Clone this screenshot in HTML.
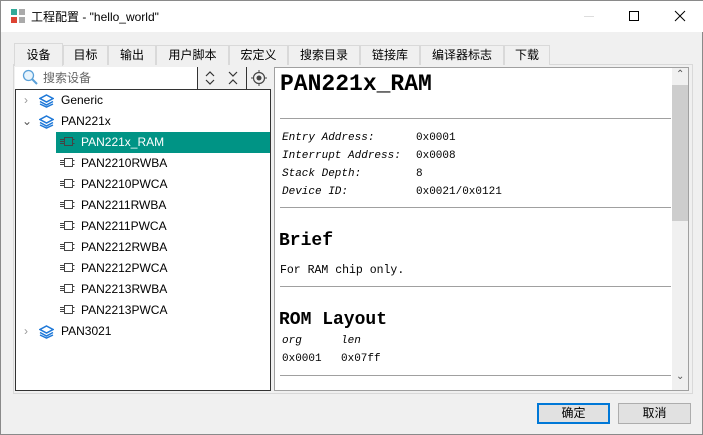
<!DOCTYPE html>
<html><head><style>
*{margin:0;padding:0;box-sizing:border-box}
body{width:703px;height:435px;background:#f0f0f0;font-family:"Liberation Sans","Noto Sans CJK SC",sans-serif;font-size:12px;color:#000;position:relative;overflow:hidden;border:1px solid #8a8a8a}
.a{position:absolute}
.title{left:0;top:0;width:703px;height:31px;background:#fff}
.tab{position:absolute;top:44px;height:20px;border:1px solid #d9d9d9;border-bottom:none;background:#f0f0f0;text-align:center;line-height:19px;font-size:12px}
.mono{font-family:"Liberation Mono","DejaVu Sans Mono",monospace}
.row{position:absolute;left:0;height:21px;line-height:21px;font-size:12px}
hr{position:absolute;left:5px;width:391px;border:none;border-top:1px solid #a0a0a0}
</style></head><body>
<div class="a title"></div>
<svg class="a" style="left:10px;top:8px" width="14" height="14"><rect x="0" y="0" width="6" height="6" fill="#3a9"/><rect x="8" y="0" width="6" height="6" fill="#aaa"/><rect x="0" y="8" width="6" height="6" fill="#d43"/><rect x="8" y="8" width="6" height="6" fill="#aaa"/></svg>
<div class="a" style="left:30px;top:7px;font-size:12px">工程配置 - "hello_world"</div>
<div class="a" style="left:583px;top:15px;width:10px;height:1px;background:#ddd"></div>
<div class="a" style="left:628px;top:10px;width:10px;height:10px;border:1px solid #000"></div>
<svg class="a" style="left:673px;top:9px" width="12" height="12"><path d="M1 1L11 11M11 1L1 11" stroke="#000" stroke-width="1"/></svg>

<div class="a" style="left:12px;top:63px;width:680px;height:330px;border:1px solid #d9d9d9;background:#f0f0f0"></div>
<div class="tab" style="left:62px;width:45px">目标</div>
<div class="tab" style="left:107px;width:48px">输出</div>
<div class="tab" style="left:155px;width:73px">用户脚本</div>
<div class="tab" style="left:228px;width:59px">宏定义</div>
<div class="tab" style="left:287px;width:72px">搜索目录</div>
<div class="tab" style="left:359px;width:60px">链接库</div>
<div class="tab" style="left:419px;width:84px">编译器标志</div>
<div class="tab" style="left:503px;width:46px">下载</div>
<div class="tab" style="left:13px;top:42px;width:49px;height:23px;background:#f0f0f0;border-color:#d9d9d9;line-height:22px">设备</div>

<div class="a" style="left:14px;top:66px;width:182px;height:22px;background:#fff"></div>
<svg class="a" style="left:21px;top:68px" width="16" height="16"><circle cx="6.5" cy="6.5" r="5" fill="#e8f4fc" stroke="#5aa0d8" stroke-width="1.3"/><path d="M10 10L15 15" stroke="#5aa0d8" stroke-width="2"/></svg>
<div class="a" style="left:42px;top:68px;color:#666">搜索设备</div>
<div class="a" style="left:196px;top:66px;width:1px;height:22px;background:#333"></div>
<div class="a" style="left:245px;top:66px;width:1px;height:22px;background:#333"></div>
<svg class="a" style="left:203px;top:70px" width="12" height="14"><path d="M2 5L6 1L10 5M2 9L6 13L10 9" stroke="#333" fill="none" stroke-width="1.2"/></svg>
<svg class="a" style="left:226px;top:70px" width="12" height="14"><path d="M2 1L6 5L10 1M2 13L6 9L10 13" stroke="#333" fill="none" stroke-width="1.2"/></svg>
<svg class="a" style="left:250px;top:69px" width="16" height="16"><circle cx="8" cy="8" r="5.5" fill="none" stroke="#444" stroke-width="1.2"/><circle cx="8" cy="8" r="2.5" fill="#444"/><path d="M8 0V3M8 13V16M0 8H3M13 8H16" stroke="#444"/></svg>

<div class="a" style="left:14px;top:88px;width:256px;height:302px;background:#fff;border:1px solid #333;overflow:hidden">
<div class="a" style="left:40px;top:42px;width:215px;height:21px;background:#009485"></div>
<div class="row" style="top:0;left:8px;color:#999">›</div>
<div class="row" style="top:21px;left:6px;color:#555">⌄</div>
<svg class="a" style="left:23px;top:4px" width="15" height="14"><path d="M7.5 1L14 4.5L7.5 8L1 4.5Z" fill="none" stroke="#1e78d8" stroke-width="1.5"/><path d="M1 7.5L7.5 11L14 7.5M1 10L7.5 13L14 10" fill="none" stroke="#1e78d8" stroke-width="1.5"/></svg>
<div class="row" style="top:0;left:45px">Generic</div>
<svg class="a" style="left:23px;top:25px" width="15" height="14"><path d="M7.5 1L14 4.5L7.5 8L1 4.5Z" fill="none" stroke="#1e78d8" stroke-width="1.5"/><path d="M1 7.5L7.5 11L14 7.5M1 10L7.5 13L14 10" fill="none" stroke="#1e78d8" stroke-width="1.5"/></svg>
<div class="row" style="top:21px;left:45px">PAN221x</div>
<div class="row" style="top:42px;left:65px;color:#fff">PAN221x_RAM</div>
<div class="row" style="top:63px;left:65px">PAN2210RWBA</div>
<div class="row" style="top:84px;left:65px">PAN2210PWCA</div>
<div class="row" style="top:105px;left:65px">PAN2211RWBA</div>
<div class="row" style="top:126px;left:65px">PAN2211PWCA</div>
<div class="row" style="top:147px;left:65px">PAN2212RWBA</div>
<div class="row" style="top:168px;left:65px">PAN2212PWCA</div>
<div class="row" style="top:189px;left:65px">PAN2213RWBA</div>
<div class="row" style="top:210px;left:65px">PAN2213PWCA</div>
<svg class="a" style="left:43px;top:47px" width="16" height="190"><defs><g id="c"><rect x="5.5" y="0.5" width="8" height="8" fill="none" stroke="#444"/><path d="M1 2.5H5M1 4.5H5M1 6.5H5M13.5 2.5H15.5M13.5 6.5H15.5" stroke="#444"/></g></defs>
<use href="#c" y="0"/><use href="#c" y="21"/><use href="#c" y="42"/><use href="#c" y="63"/><use href="#c" y="84"/><use href="#c" y="105"/><use href="#c" y="126"/><use href="#c" y="147"/><use href="#c" y="168"/></svg>
<div class="row" style="top:231px;left:8px;color:#999">›</div>
<svg class="a" style="left:23px;top:235px" width="15" height="14"><path d="M7.5 1L14 4.5L7.5 8L1 4.5Z" fill="none" stroke="#1e78d8" stroke-width="1.5"/><path d="M1 7.5L7.5 11L14 7.5M1 10L7.5 13L14 10" fill="none" stroke="#1e78d8" stroke-width="1.5"/></svg>
<div class="row" style="top:231px;left:45px">PAN3021</div>
</div>

<div class="a mono" style="left:273px;top:66px;width:415px;height:324px;background:#fff;border:1px solid #a0a0a0;overflow:hidden">
<div class="a" style="left:5px;top:3px;font-size:23px;font-weight:bold">PAN221x_RAM</div>
<hr style="top:50px">
<div class="a" style="left:7px;top:61px;font-size:11px;line-height:18px;font-style:italic">Entry Address:<br>Interrupt Address:<br>Stack Depth:<br>Device ID:</div>
<div class="a" style="left:141px;top:61px;font-size:11px;line-height:18px">0x0001<br>0x0008<br>8<br>0x0021/0x0121</div>
<hr style="top:139px">
<div class="a" style="left:4px;top:163px;font-size:18px;font-weight:bold">Brief</div>
<div class="a" style="left:5px;top:196px;font-size:11.5px">For RAM chip only.</div>
<hr style="top:218px">
<div class="a" style="left:4px;top:242px;font-size:18px;font-weight:bold">ROM Layout</div>
<div class="a" style="left:7px;top:267px;font-size:11px;font-style:italic">org</div>
<div class="a" style="left:66px;top:267px;font-size:11px;font-style:italic">len</div>
<div class="a" style="left:7px;top:285px;font-size:11px">0x0001</div>
<div class="a" style="left:66px;top:285px;font-size:11px">0x07ff</div>
<hr style="top:307px">
<div class="a" style="left:397px;top:0;width:17px;height:322px;background:#f0f0f0"></div>
<div class="a" style="left:397px;top:17px;width:16px;height:136px;background:#cdcdcd"></div>
<div class="a" style="left:401px;top:1px;font-size:10px;color:#555;font-family:'Liberation Sans'">⌃</div>
<div class="a" style="left:401px;top:303px;font-size:10px;color:#555;font-family:'Liberation Sans'">⌄</div>
</div>

<div class="a" style="left:536px;top:402px;width:73px;height:21px;border:2px solid #0078d7;background:#e1e1e1;text-align:center;line-height:17px">确定</div>
<div class="a" style="left:617px;top:402px;width:73px;height:21px;border:1px solid #adadad;background:#e1e1e1;text-align:center;line-height:19px">取消</div>
</body></html>
